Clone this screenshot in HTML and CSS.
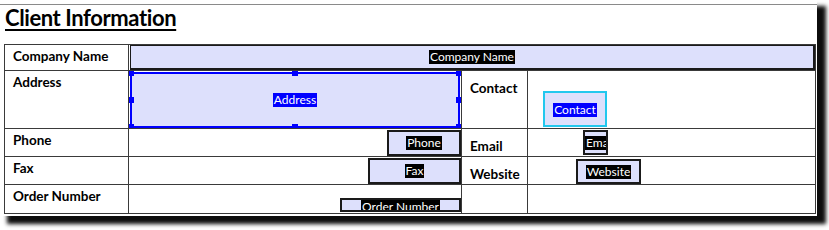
FILE: index.html
```html
<!DOCTYPE html>
<html lang="en">
<head>
  <meta charset="UTF-8" />
  <meta name="viewport" content="width=device-width, initial-scale=1" />
  <title>Client Information</title>
  <link rel="stylesheet" href="styles.css">
</head>
<body>
  <div class="sheet">
    <div class="rule"></div>
    <h1 class="title">Client Information</h1>

    <div class="form-grid">
      <!-- row 1 -->
      <div class="label">Company Name</div>
      <div class="cell span-3">
        <div class="field field-company"><span class="hl">Company Name</span></div>
      </div>

      <!-- row 2 -->
      <div class="label">Address</div>
      <div class="cell">
        <div class="field field-address">
          <span class="hl hl-blue">Address</span>
          <span class="handle h-tl"></span>
          <span class="handle h-tm"></span>
          <span class="handle h-tr"></span>
          <span class="handle h-ml"></span>
          <span class="handle h-mr"></span>
          <span class="handle h-bl"></span>
          <span class="handle h-bm"></span>
          <span class="handle h-br"></span>
        </div>
      </div>
      <div class="label label-right">Contact</div>
      <div class="cell">
        <div class="field field-contact"><span class="hl hl-blue">Contact</span></div>
      </div>

      <!-- row 3 -->
      <div class="label">Phone</div>
      <div class="cell cell-end">
        <div class="field field-phone"><span class="hl">Phone</span></div>
      </div>
      <div class="label label-right">Email</div>
      <div class="cell">
        <div class="field field-email"><span class="hl">Email</span></div>
      </div>

      <!-- row 4 -->
      <div class="label">Fax</div>
      <div class="cell cell-end">
        <div class="field field-fax"><span class="hl">Fax</span></div>
      </div>
      <div class="label label-right">Website</div>
      <div class="cell">
        <div class="field field-website"><span class="hl">Website</span></div>
      </div>

      <!-- row 5 -->
      <div class="label">Order Number</div>
      <div class="cell cell-end">
        <div class="field field-order"><span class="hl">Order Number</span></div>
      </div>
      <div class="cell"></div>
      <div class="cell"></div>
    </div>
  </div>
</body>
</html>
```

FILE: styles.css
```css
:root {
  --line: #3a3a3a;
  --field: #dde0fc;
  --blue: #0000ff;
  --cyan: #22c8ee;
}
* {
  box-sizing: border-box;
  margin: 0;
  padding: 0;
}
html, body {
  height: 100%;
}
body {
  min-height: 230px;
  background: #fff;
  font-family: Lato, "Open Sans", sans-serif;
  color: #000;
}

/* ───── Page ───── */
.sheet {
  width: 817px;
  height: 216px;
  padding-top: 4px;
  background: #fff;
  box-shadow: 8px 7px 4px 1px rgba(0,0,0,0.95);
}
.rule {
  border-top: 1px solid #8a8a8a;
}
.title {
  font-size: 22px;
  line-height: 26px;
  font-weight: 700;
  letter-spacing: -0.4px;
  text-decoration: underline;
  text-decoration-thickness: 2px;
  text-underline-offset: 3px;
  padding-left: 5px;
  margin-bottom: 13px;
}

/* ───── Form table ───── */
.form-grid {
  margin-left: 4px;
  width: 812px;
  display: grid;
  grid-template-columns: 123px 332px 65px 287px;
  grid-template-rows: 25px 57px 27px 27px 28px;
  gap: 1px;
  padding: 1px;
  background: var(--line);
}
.label,
.cell {
  background: #fff;
  overflow: hidden;
}
.label {
  font-size: 13.5px;
  font-weight: 700;
  padding: 3px 8px 0;
}
.label-right { padding-top: 9px; }
.cell {
  display: flex;
  align-items: flex-start;
}
.cell-end { justify-content: flex-end; }
.span-3 { grid-column: span 3; }

/* ───── Fields ───── */
.field {
  position: relative;
  display: flex;
  align-items: center;
  justify-content: center;
  flex-shrink: 0;
  overflow: hidden;
  background: var(--field);
  border: 2px solid #1a1a1a;
}
.hl {
  background: #000;
  color: #fff;
  font-size: 12px;
  line-height: 14px;
  white-space: nowrap;
  padding: 0 1px;
}
.hl-blue { background: var(--blue); }

.field-company {
  width: 685px;
  height: 25px;
  margin-left: 1px;
  border-width: 1px 2px 2px 1px;
}
.field-address {
  width: 330px;
  height: 56px;
  margin: 1px 0 0 1px;
  border-color: var(--blue);
  overflow: visible;
}
.field-contact {
  width: 64px;
  height: 36px;
  margin: 20px 0 0 15px;
  border-color: var(--cyan);
  padding-top: 2px;
}
.field-phone {
  width: 74px;
  height: 26px;
  margin-top: 1px;
}
.field-fax {
  width: 93px;
  height: 26px;
  margin-top: 1px;
}
.field-order {
  width: 121px;
  height: 14px;
  margin-top: 13px;
  align-items: flex-start;
}
.field-email {
  width: 25px;
  height: 25px;
  margin: 1px 0 0 55px;
  justify-content: flex-start;
}
.field-website {
  width: 65px;
  height: 25px;
  margin: 2px 0 0 48px;
}

/* ───── Selection handles ───── */
.handle {
  position: absolute;
  width: 6px;
  height: 6px;
  background: var(--blue);
}
.h-tl, .h-tm, .h-tr { top: -4px; }
.h-bl, .h-bm, .h-br { bottom: -4px; }
.h-ml, .h-mr { top: calc(50% - 3px); }
.h-tl, .h-ml, .h-bl { left: -4px; }
.h-tr, .h-mr, .h-br { right: -4px; }
.h-tm, .h-bm { left: calc(50% - 3px); }
```
